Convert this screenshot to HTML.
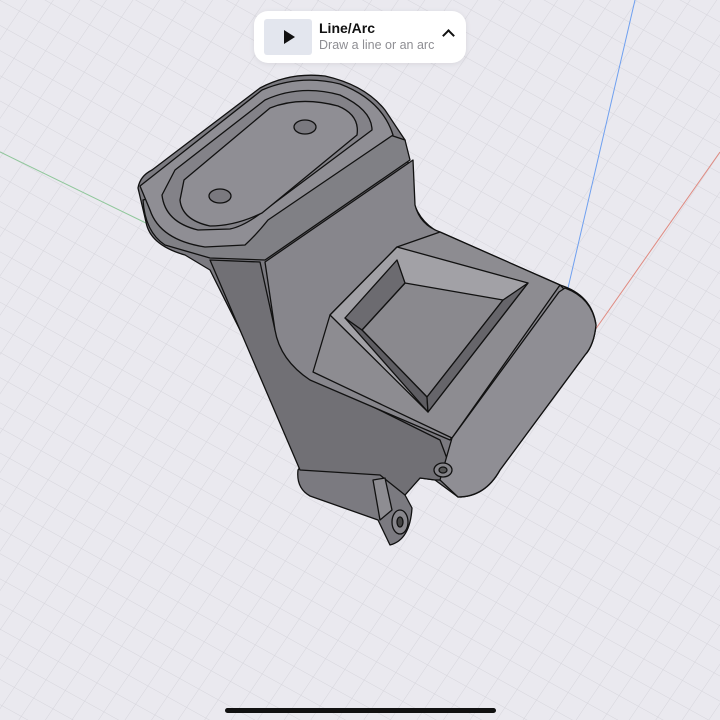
<!DOCTYPE html>
<html><head><meta charset="utf-8"><style>
html,body{margin:0;padding:0;width:720px;height:720px;overflow:hidden;background:#eae9ef;font-family:"Liberation Sans",sans-serif}
svg{position:absolute;left:0;top:0}
.card{position:absolute;left:254px;top:11px;width:212px;height:52px;background:#fff;border-radius:14px;box-shadow:0 1px 6px rgba(0,0,0,.08)}
.thumb{position:absolute;left:10px;top:8px;width:48px;height:36px;background:#e3e6ee;border-radius:3px}
.thumb:after{content:"";position:absolute;left:20px;top:11px;border-left:11px solid #111;border-top:7px solid transparent;border-bottom:7px solid transparent}
.t1{position:absolute;left:65px;top:9px;font-size:14px;font-weight:bold;color:#111}
.t2{position:absolute;left:65px;top:27px;font-size:12.5px;color:#8e8e93}
.chev{position:absolute;left:190px;top:20px;width:7px;height:7px;border-left:2px solid #111;border-top:2px solid #111;transform:rotate(45deg)}
.home{position:absolute;left:225px;top:708px;width:271px;height:5px;border-radius:3px;background:#111}
</style></head><body>
<svg width="720" height="720" viewBox="0 0 720 720">
<defs>
<pattern id="g1" width="720" height="22" patternUnits="userSpaceOnUse" patternTransform="rotate(29)"><line x1="0" y1="0" x2="720" y2="0" stroke="#d6d5dc" stroke-width="1"/></pattern>
<pattern id="g2" width="720" height="22" patternUnits="userSpaceOnUse" patternTransform="rotate(-56)"><line x1="0" y1="0" x2="720" y2="0" stroke="#d6d5dc" stroke-width="1"/></pattern>
</defs>
<rect width="720" height="720" fill="url(#g1)"/>
<rect width="720" height="720" fill="url(#g2)"/>
<line x1="0" y1="152" x2="150" y2="225" stroke="#8fc79a" stroke-width="1"/>
<line x1="568" y1="288" x2="635" y2="0" stroke="#6fa0f0" stroke-width="1"/>
<line x1="595" y1="330" x2="720" y2="152" stroke="#e08a80" stroke-width="1"/>
<g stroke="#111" stroke-width="1.3" stroke-linejoin="round">
<!-- silhouette -->
<path d="M138,188 Q140,176 152,170 L260,88 Q290,72 325,76 Q365,85 385,110 L405,140 L413,200 Q420,225 445,235 L560,285 Q592,295 596,325 Q594,345 585,355 L500,470 Q485,497 458,497 L435,480 L420,478 L405,495 L412,508 Q410,540 390,545 L378,520 L310,496 Q296,488 298,470 L305,460 L210,270 L185,255 Q150,245 146,222 Z" fill="#7b7a80"/>
<!-- left front face -->
<path d="M210,260 L260,262 L275,330 Q290,365 315,378 L440,440 L455,480 L435,480 L420,478 L405,495 L380,475 L300,470 Z" fill="#717075"/>
<!-- pad side -->
<path d="M143,200 Q145,232 165,245 L210,258 L265,260 L410,160 L405,140 L390,135 Z" fill="#808085"/>
<!-- pad top -->
<path d="M140,186 L262,90 Q300,74 340,84 Q382,100 393,135 L268,220 Q256,235 245,245 L205,247 Q160,240 150,210 Z" fill="#8f8e94"/>
<path d="M175,170 L265,100 Q300,84 340,95 Q372,110 372,130 L265,210 Q245,226 230,229 L198,230 Q165,222 162,195 Z" fill="#838288"/>
<path d="M184,180 L270,108 Q300,96 338,106 Q360,115 357,135 L262,213 Q235,226 210,226 Q182,220 180,200 Z" fill="#8f8e94"/>
<ellipse cx="305" cy="127" rx="11" ry="7" fill="#7a797f"/>
<ellipse cx="220" cy="196" rx="11" ry="7" fill="#7a797f"/>
<!-- right rail top -->
<path d="M265,262 L413,160 L415,205 Q420,225 440,232 L560,285 L565,290 L450,440 L310,380 Q280,360 275,330 Z" fill="#87868c"/>
<path d="M313,372 L330,315 L397,247 L440,232 L560,285 L452,438 Z" fill="#8d8c91"/>
<!-- pocket -->
<path d="M397,247 L528,283 L428,412 L330,315 Z" fill="#a2a1a6"/>
<path d="M405,283 L503,300 L427,397 L362,330 Z" fill="#8a898e"/>
<path d="M362,330 L427,397 L428,412 L345,318 Z" fill="#5e5d62"/>
<path d="M405,283 L362,330 L345,318 L397,260 Z" fill="#6c6b70"/>
<path d="M503,300 L528,283 L428,412 L427,397 Z" fill="#66656a"/>
<!-- cylinder -->
<path d="M559,292 L565,288 Q592,298 596,325 Q594,345 585,355 L500,470 Q485,497 458,497 L440,480 L452,438 Z" fill="#8f8e94"/>
<ellipse cx="443" cy="470" rx="9" ry="7" fill="#86858a"/>
<ellipse cx="443" cy="470" rx="4" ry="3" fill="#555"/>
<!-- lower knob -->
<path d="M373,480 L385,478 L392,510 L380,520 Z" fill="#8e8d92"/>
<ellipse cx="400" cy="522" rx="8" ry="12" fill="#88878c"/>
<ellipse cx="400" cy="522" rx="3" ry="5" fill="#444"/>
</g>
</svg>
<div class="card"><div class="thumb"></div><div class="t1">Line/Arc</div><div class="t2">Draw a line or an arc</div><div class="chev"></div></div>
<div class="home"></div>
</body></html>
